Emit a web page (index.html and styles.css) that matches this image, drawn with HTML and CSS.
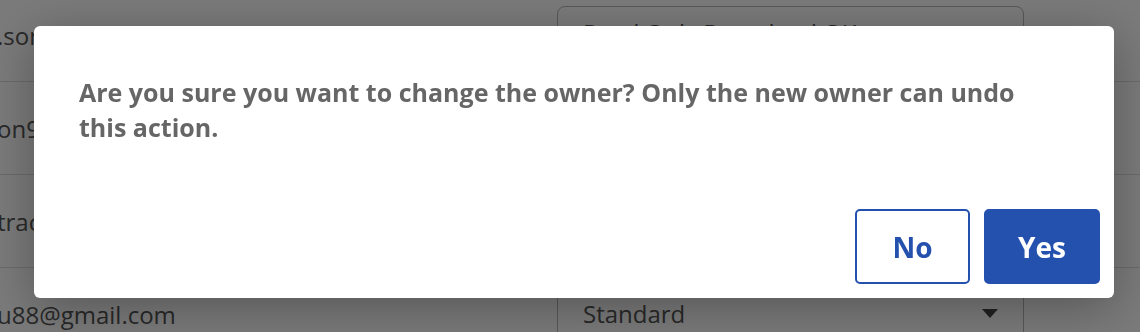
FILE: index.html
```html
<!DOCTYPE html>
<html lang="en">
<head>
  <meta charset="UTF-8">
  <meta name="viewport" content="width=device-width, initial-scale=1.0">
  <title>Members</title>
  <link rel="stylesheet" href="styles.css">
</head>
<body>
  <div class="members">
    <div class="row">
      <div class="email">.sony</div>
      <div class="role">
        <div class="field">Read Only Download OK</div>
      </div>
      <div class="extra"></div>
    </div>
    <div class="row">
      <div class="email">on9x</div>
      <div class="role">
        <div class="field">Standard</div>
      </div>
      <div class="extra"></div>
    </div>
    <div class="row">
      <div class="email">tracy</div>
      <div class="role">
        <div class="field">Standard</div>
      </div>
      <div class="extra"></div>
    </div>
    <div class="row">
      <div class="email">u88@gmail.com</div>
      <div class="role">
        <div class="field select">Standard <span class="caret"></span></div>
      </div>
      <div class="extra"></div>
    </div>
  </div>

  <div class="overlay">
    <div class="modal">
      <p class="message">Are you sure you want to change the owner? Only the new owner can undo this action.</p>
      <div class="actions">
        <button class="btn btn-outline">No</button>
        <button class="btn btn-primary">Yes</button>
      </div>
    </div>
  </div>
</body>
</html>
```

FILE: styles.css
```css
body {
  margin: 0;
  font-family: "Open Sans", "Liberation Sans", sans-serif;
  background-color: #fff;
  overflow: hidden;
}

.members {
  margin-top: -11px;
}

.row {
  display: flex;
  height: 92px;
  border-bottom: 1px solid #ddd;
}

.email {
  width: 560px;
  margin-left: -3px;
  display: flex;
  align-items: center;
  font-size: 24px;
  color: #555;
  white-space: nowrap;
  overflow: hidden;
}

.role {
  width: 467px;
  padding-top: 19px;
}

.row:first-child .role {
  padding-top: 17px;
}

.extra {
  flex: 1;
}

.field {
  box-sizing: border-box;
  height: 52px;
  padding: 0 25px;
  display: flex;
  align-items: center;
  justify-content: space-between;
  border: 1px solid #b8b8b8;
  border-radius: 8px;
  font-size: 24px;
  color: #555;
}

.caret {
  width: 0;
  height: 0;
  border-left: 8.5px solid transparent;
  border-right: 8.5px solid transparent;
  border-top: 9px solid #444;
}

.overlay {
  position: fixed;
  top: 0;
  left: 0;
  right: 0;
  bottom: 0;
  box-sizing: border-box;
  padding: 26px 26px 34px 34px;
  background-color: rgba(0, 0, 0, 0.52);
}

.modal {
  height: 272px;
  width: 1080px;
  display: flex;
  flex-direction: column;
  justify-content: space-between;
  box-sizing: border-box;
  background-color: #fff;
  border-radius: 6px;
  box-shadow: 0 10px 50px rgba(0, 0, 0, 0.3);
}

.message {
  margin: 0;
  padding: 49px 80px 0 45px;
  font-size: 25px;
  line-height: 35px;
  font-weight: 700;
  color: #666;
}

.actions {
  display: flex;
  justify-content: flex-end;
  gap: 14px;
  padding: 0 14px 14px 0;
}

.btn {
  box-sizing: border-box;
  height: 75px;
  font-family: "Open Sans", "Liberation Sans", sans-serif;
  font-size: 28px;
  font-weight: 700;
  border-radius: 5px;
  cursor: pointer;
}

.btn-outline {
  width: 115px;
  background-color: #fff;
  color: #2450ae;
  border: 2px solid #2450ae;
}

.btn-primary {
  width: 116px;
  background-color: #2450ae;
  color: #fff;
  border: 2px solid #2450ae;
}
```
